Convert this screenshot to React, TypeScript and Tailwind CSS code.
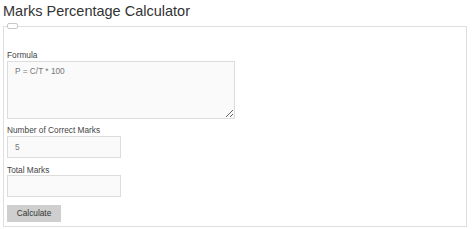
import { useState } from "react";

const FONT = { fontFamily: '"Liberation Sans", Arial, sans-serif' };

export default function App() {
  const [correct, setCorrect] = useState("5");
  const [total, setTotal] = useState("");

  return (
    <div className="w-[474px] h-[229px] bg-white overflow-hidden" style={FONT}>
      <h1 className="h-[23px] pl-[3px] pt-[2px] text-[14.5px] leading-[18px] font-normal text-[#333]">
        Marks Percentage Calculator
      </h1>
      <fieldset className="ml-[3px] w-[464px] border border-[#dedede] pl-[3px] pb-[4px]">
        <legend className="block w-[11px] h-[6px] border border-[#c8c8c8] rounded-[2px] bg-white" />
        <label className="block mt-[21px] text-[8.3px] leading-[10px] text-[#444]">Formula</label>
        <textarea
          className="block mt-[1px] w-[228px] h-[58px] border border-[#dcdcdc] bg-[#fafafa] pl-[7px] pt-[4px] text-[8.3px] leading-[10px] text-[#777] outline-none"
          defaultValue="P = C/T * 100"
        />
        <label className="block mt-[6px] text-[8.3px] leading-[10px] text-[#444]">
          Number of Correct Marks
        </label>
        <input
          className="block mt-[1px] w-[114px] h-[22px] border border-[#dcdcdc] bg-[#fafafa] pl-[7px] text-[8.3px] text-[#777] outline-none"
          value={correct}
          onChange={(e) => setCorrect(e.target.value)}
        />
        <label className="block mt-[7px] text-[8.3px] leading-[10px] text-[#444]">Total Marks</label>
        <input
          className="block w-[114px] h-[22px] border border-[#dcdcdc] bg-[#fafafa] pl-[7px] text-[8.3px] text-[#777] outline-none"
          value={total}
          onChange={(e) => setTotal(e.target.value)}
        />
        <button
          type="button"
          className="block mt-[8px] w-[54px] h-[17px] bg-[#cfcfcf] text-[8.3px] leading-[17px] text-[#333] text-center"
        >
          Calculate
        </button>
      </fieldset>
    </div>
  );
}
